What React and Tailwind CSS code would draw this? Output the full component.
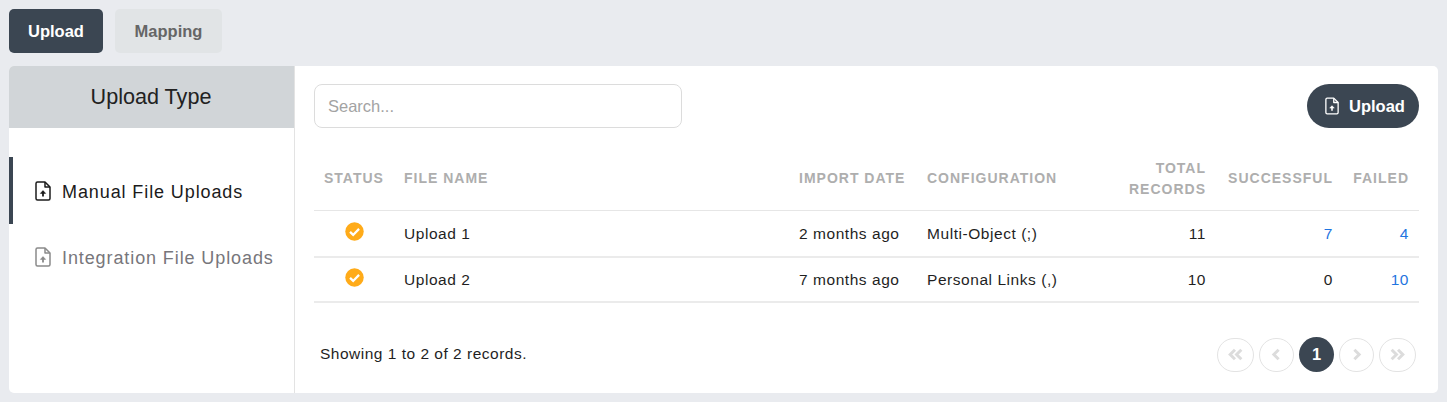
import React from 'react';

const FileUp = ({ className }) => (
  <svg viewBox="0 0 16 20" className={className} fill="none" stroke="currentColor" strokeWidth="1.5" strokeLinejoin="round">
    <path d="M2.5 1h7.5l5 5v11.5a1.5 1.5 0 0 1-1.5 1.5h-11A1.5 1.5 0 0 1 1 17.5v-15A1.5 1.5 0 0 1 2.5 1z" />
    <path d="M10 1v5h5" />
    <path d="M8 15.5V10.5" strokeWidth="1.8" />
    <path d="M5.4 12.4 8 9.6l2.6 2.8z" fill="currentColor" strokeWidth="0.6" />
  </svg>
);

const StatusIcon = () => (
  <svg viewBox="0 0 20 20" className="w-[19px] h-[19px] mx-auto">
    <circle cx="10" cy="10" r="9.7" fill="#ffab19" />
    <path d="M5.3 10.4 8.6 13.6 14.8 7.2" fill="none" stroke="#fff" strokeWidth="2.4" />
  </svg>
);

const Chevrons = ({ dir, double }) => (
  <svg viewBox="0 0 16 12" className="w-[17px] h-[13px]" fill="none" stroke="#dcdcdc" strokeWidth="2.8">
    {dir === 'left' ? (
      double ? (
        <><path d="M7.5 1.5 3 6l4.5 4.5" /><path d="M13.5 1.5 9 6l4.5 4.5" /></>
      ) : (
        <path d="M10 1.5 5.5 6l4.5 4.5" />
      )
    ) : double ? (
      <><path d="M2.5 1.5 7 6l-4.5 4.5" /><path d="M8.5 1.5 13 6l-4.5 4.5" /></>
    ) : (
      <path d="M6 1.5 10.5 6 6 10.5" />
    )}
  </svg>
);

const rows = [
  { name: 'Upload 1', date: '2 months ago', config: 'Multi-Object (;)', total: 11, ok: 7, failed: 4, okLink: true, height: 'h-[47px]', iconPad: 'pb-[3px]' },
  { name: 'Upload 2', date: '7 months ago', config: 'Personal Links (,)', total: 10, ok: 0, failed: 10, okLink: false, height: 'h-[45px]', iconPad: 'pb-[5px]' },
];

const thClass = 'px-[10px] text-[14px] leading-[21px] font-bold tracking-[1px] text-[#aeaeae] uppercase';

const App = () => {
  return (
    <div className="w-[1447px] h-[402px] bg-[#e9ebef] p-[9px] font-['Liberation_Sans',Arial,sans-serif] overflow-hidden">
      <div className="flex gap-3 h-[44px]">
        <button className="w-[94px] rounded-[5px] bg-[#3b4652] text-white text-[16.5px] font-bold">Upload</button>
        <button className="w-[107px] rounded-[5px] bg-[#e1e4e6] text-[#666666] text-[16.5px] font-bold">Mapping</button>
      </div>

      <div className="flex mt-[13px] h-[327px] bg-white rounded-[5px] overflow-hidden">
        <div className="w-[286px] shrink-0 border-r border-[#e3e3e3]">
          <div className="h-[62px] bg-[#d1d5d8] flex items-center justify-center text-[21.6px] text-[#222222] pr-[1px]">
            Upload Type
          </div>
          <div className="mt-[29px] flex flex-col">
            <div className="h-[67px] border-l-4 border-[#3b4652] pl-[22px] flex items-center gap-[11px] text-[#1b1b1b] text-[18px] tracking-[0.9px]">
              <FileUp className="w-[16px] h-[20px] shrink-0" />
              <span className="pt-[3px]">Manual File Uploads</span>
            </div>
            <div className="h-[67px] pl-[26px] flex items-center gap-[11px] text-[#77767b] text-[18px] tracking-[0.9px]">
              <FileUp className="w-[16px] h-[20px] shrink-0 -mt-[1px] text-[#8a8a8a]" />
              <span className="pt-[1px]">Integration File Uploads</span>
            </div>
          </div>
        </div>

        <div className="flex-1 pt-[18px] pl-[19px] pr-[19px]">
          <div className="flex items-start justify-between">
            <input
              placeholder="Search..."
              className="w-[368px] h-[44px] rounded-[8px] border border-[#dcdcdc] px-[13px] pt-[1px] text-[16.5px] outline-none placeholder:text-[#a3a3a3]"
            />
            <button className="w-[112px] h-[44px] rounded-full bg-[#3b4652] text-white text-[16.5px] font-bold flex items-center justify-start pl-[18px] gap-[10px]">
              <FileUp className="w-[14px] h-[18px]" />
              Upload
            </button>
          </div>

          <table className="w-[1105px] table-fixed border-collapse mt-[20px]">
            <colgroup>
              <col className="w-[80px]" />
              <col className="w-[395px]" />
              <col className="w-[128px]" />
              <col className="w-[183px]" />
              <col className="w-[116px]" />
              <col className="w-[127px]" />
              <col className="w-[76px]" />
            </colgroup>
            <thead>
              <tr className="h-[62px] border-b border-[#e6e6e6]">
                <th className={`${thClass} text-left whitespace-nowrap`}>Status</th>
                <th className={`${thClass} text-left`}>File Name</th>
                <th className={`${thClass} text-left whitespace-nowrap`}>Import Date</th>
                <th className={`${thClass} text-left`}>Configuration</th>
                <th className={`${thClass} text-right`}>Total Records</th>
                <th className={`${thClass} text-right`}>Successful</th>
                <th className={`${thClass} text-right`}>Failed</th>
              </tr>
            </thead>
            <tbody className="text-[15.5px] text-[#1f1f1f] tracking-[0.55px]">
              {rows.map((row) => (
                <tr key={row.name} className={`${row.height} border-b-2 border-[#ebebeb]`}>
                  <td className={`px-[10px] ${row.iconPad}`}><StatusIcon /></td>
                  <td className="px-[10px]">{row.name}</td>
                  <td className="px-[10px] whitespace-nowrap">{row.date}</td>
                  <td className="px-[10px]">{row.config}</td>
                  <td className="px-[10px] text-right">{row.total}</td>
                  <td className={`px-[10px] text-right ${row.okLink ? 'text-[#1f75e0]' : ''}`}>{row.ok}</td>
                  <td className="px-[10px] text-right text-[#1f75e0]">{row.failed}</td>
                </tr>
              ))}
            </tbody>
          </table>

          <div className="flex items-center justify-between mt-[34px] pl-[6px] pr-[3px]">
            <span className="text-[15.5px] text-[#1f1f1f] tracking-[0.5px] -mt-[2px]">Showing 1 to 2 of 2 records.</span>
            <div className="flex items-center gap-[5px]">
              <span className="w-[37px] h-[34px] rounded-full border border-[#e3e3e3] flex items-center justify-center"><Chevrons dir="left" double /></span>
              <span className="w-[35px] h-[34px] rounded-full border border-[#e3e3e3] flex items-center justify-center"><Chevrons dir="left" /></span>
              <span className="w-[35px] h-[35px] rounded-full bg-[#3b4652] text-white text-[16.5px] font-bold flex items-center justify-center">1</span>
              <span className="w-[35px] h-[34px] rounded-full border border-[#e3e3e3] flex items-center justify-center"><Chevrons dir="right" /></span>
              <span className="w-[37px] h-[34px] rounded-full border border-[#e3e3e3] flex items-center justify-center"><Chevrons dir="right" double /></span>
            </div>
          </div>
        </div>
      </div>
    </div>
  );
};

export default App;
